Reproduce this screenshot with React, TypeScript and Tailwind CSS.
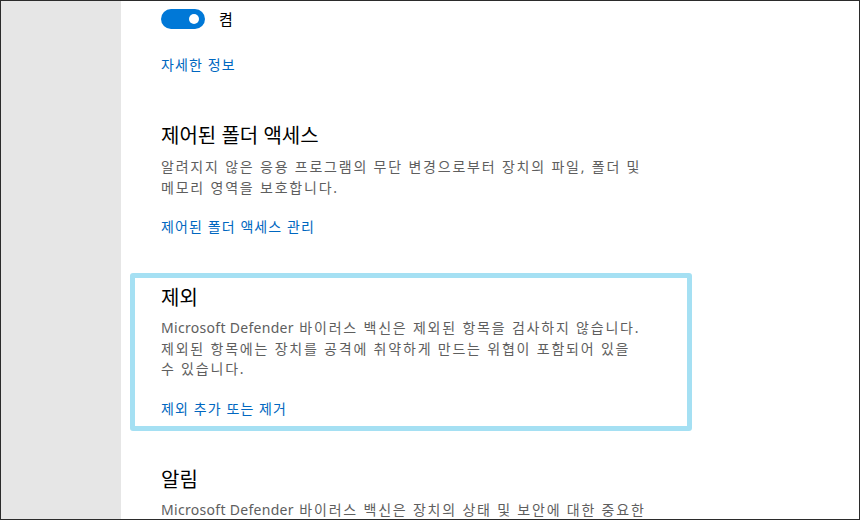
import type { ReactNode } from 'react'

const FONT = "font-['Noto_Sans','Noto_Sans_CJK_KR',sans-serif]"

function Toggle() {
  return (
    <div className="flex h-[20px] w-[44px] items-center justify-end rounded-full bg-[#0078d7] pr-[6px]">
      <div className="h-[10px] w-[10px] rounded-full bg-white" />
    </div>
  )
}

// Latin brand name runs tighter than the hangul around it
const MD = <span className="tracking-[0.3px]">Microsoft Defender</span>

interface SectionProps {
  title: string
  lines: ReactNode[]
  link?: string
  highlight?: boolean
  className?: string
  lineClass?: string
}

function Section({ title, lines, link, highlight, className = '', lineClass = 'leading-[20.5px]' }: SectionProps) {
  return (
    <section
      className={`w-[562px] rounded-[3px] border-[5px] pl-[26px] pt-[6px] pb-[7px] ${
        highlight ? 'border-[#a5e0f3]' : 'border-transparent'
      } ${className}`}
    >
      <h2 className="text-[20px] leading-[28px] text-black">{title}</h2>
      <p className={`mt-[6px] text-[14px] tracking-[1.8px] text-[#5e5e5e] ${lineClass}`}>
        {lines.map((l, i) => (
          <span key={i} className="block whitespace-nowrap">
            {l}
          </span>
        ))}
      </p>
      {link && (
        <a className="mt-[19px] block text-[14px] leading-[20px] tracking-[1.1px] text-[#0067c0]" href="#">
          {link}
        </a>
      )}
    </section>
  )
}

export default function App() {
  return (
    <div className={`flex h-[520px] w-[860px] overflow-hidden border border-[#2b2b2b] bg-white ${FONT}`}>
      <aside className="w-[120px] shrink-0 bg-[#e6e6e6]" />
      <main className="flex-1 pl-[9px]">
        <div className="pl-[31px]">
          <div className="mt-[8px] flex h-[20px] items-center gap-[14px]">
            <Toggle />
            <span className="text-[15px] text-black">켬</span>
          </div>
          <a className="mt-[26px] block text-[14px] leading-[20px] tracking-[1.1px] text-[#0067c0]" href="#">
            자세한 정보
          </a>
        </div>

        <Section
          className="mt-[36px]"
          lineClass="leading-[21px]"
          title="제어된 폴더 액세스"
          lines={[
            '알려지지 않은 응용 프로그램의 무단 변경으로부터 장치의 파일, 폴더 및',
            '메모리 영역을 보호합니다.',
          ]}
          link="제어된 폴더 액세스 관리"
        />

        <Section
          highlight
          className="mt-[24px]"
          title="제외"
          lines={[
            <>{MD} 바이러스 백신은 제외된 항목을 검사하지 않습니다.</>,
            '제외된 항목에는 장치를 공격에 취약하게 만드는 위협이 포함되어 있을',
            '수 있습니다.',
          ]}
          link="제외 추가 또는 제거"
        />

        <Section
          className="mt-[24px]"
          title="알림"
          lines={[<>{MD} 바이러스 백신은 장치의 상태 및 보안에 대한 중요한</>]}
        />
      </main>
    </div>
  )
}
